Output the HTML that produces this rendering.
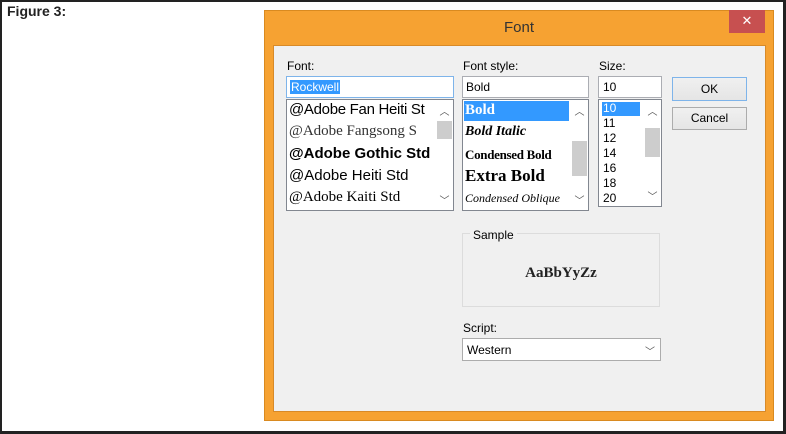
<!DOCTYPE html>
<html><head><style>
*{margin:0;padding:0;box-sizing:border-box}
body{width:786px;height:434px;background:#fff;position:relative;overflow:hidden;font-family:"Liberation Sans",sans-serif;font-size:12px;color:#000}
.frame{position:absolute;left:0;top:0;width:786px;height:434px;border:2px solid #222;border-right-width:3px;border-bottom-width:3px}
.a{position:absolute}
.dlg{left:264px;top:10px;width:510px;height:411px;background:#f6a232;border:1px solid #d98a20}
.client{left:273px;top:45px;width:493px;height:367px;background:#f0f0f0;border:1px solid #d88a28}
.box{background:#fff;border:1px solid #abadb3}
.lst{background:#fff;border:1px solid #828790;overflow:hidden}
.sb{position:absolute;background:#fff;width:17px;top:0;bottom:0;right:0}
.thumb{position:absolute;background:#cdcdcd;left:1px;right:1px}
.ar{position:absolute;left:0;width:17px;text-align:center;font-size:10px;color:#555}
.btn{background:linear-gradient(#f0f0f0,#e5e5e5);border:1px solid #acacac;text-align:center;line-height:21px;font-size:12px}
.it{position:absolute;left:2px;white-space:nowrap}
</style></head><body>
<div class="frame"></div>
<div class="a" style="left:7px;top:3px;font-weight:bold;font-size:14px;color:#222">Figure 3:</div>

<div class="a dlg"></div>
<div class="a" style="left:264px;top:19px;width:510px;text-align:center;font-size:15px;color:#333">Font</div>
<div class="a" style="left:729px;top:10px;width:36px;height:23px;background:#c75050;color:#fff;text-align:center;font-size:13px;line-height:22px">✕</div>
<div class="a client"></div>

<div class="a" style="left:287px;top:59px">Font:</div>
<div class="a box" style="left:286px;top:76px;width:168px;height:22px;border-color:#7eb4ea"><span style="position:absolute;left:3px;top:3px;background:#3399ff;color:#fff;padding:0 1px">Rockwell</span></div>
<div class="a lst" style="left:286px;top:99px;width:168px;height:112px">
 <div class="it" style="top:1px;font-size:15px;letter-spacing:-0.3px">@Adobe Fan Heiti St</div>
 <div class="it" style="top:23px;font-size:15px;font-family:'Liberation Serif',serif;color:#333">@Adobe Fangsong S</div>
 <div class="it" style="top:45px;font-size:15px;font-weight:bold">@Adobe Gothic Std</div>
 <div class="it" style="top:67px;font-size:15px">@Adobe Heiti Std</div>
 <div class="it" style="top:89px;font-size:15px;font-family:'Liberation Serif',serif">@Adobe Kaiti Std</div>
 <div class="sb"><div class="ar" style="top:3px">︿</div><div class="thumb" style="top:21px;height:18px"></div><div class="ar" style="bottom:3px">﹀</div></div>
</div>

<div class="a" style="left:463px;top:59px">Font style:</div>
<div class="a box" style="left:462px;top:76px;width:127px;height:22px"><span style="position:absolute;left:3px;top:3px">Bold</span></div>
<div class="a lst" style="left:462px;top:99px;width:127px;height:112px;font-family:'Liberation Serif',serif">
 <div class="a" style="left:1px;top:1px;width:105px;height:20px;background:#3399ff"></div>
 <div class="it" style="top:2px;font-size:15px;font-weight:bold;color:#fff">Bold</div>
 <div class="it" style="top:24px;font-size:14px;font-weight:bold;font-style:italic">Bold Italic</div>
 <div class="it" style="top:47px;font-size:13px;font-weight:bold;letter-spacing:-0.3px">Condensed Bold</div>
 <div class="it" style="top:66px;font-size:17px;font-weight:bold">Extra Bold</div>
 <div class="it" style="top:91px;font-size:12px;font-style:italic">Condensed Oblique</div>
 <div class="sb"><div class="ar" style="top:3px">︿</div><div class="thumb" style="top:41px;height:35px"></div><div class="ar" style="bottom:3px">﹀</div></div>
</div>

<div class="a" style="left:599px;top:59px">Size:</div>
<div class="a box" style="left:598px;top:76px;width:64px;height:22px"><span style="position:absolute;left:4px;top:3px">10</span></div>
<div class="a lst" style="left:598px;top:99px;width:64px;height:108px">
 <div class="a" style="left:3px;top:2px;width:38px;height:14px;background:#3399ff"></div>
 <div class="it" style="left:4px;top:1px;color:#fff">10</div>
 <div class="it" style="left:4px;top:16px">11</div>
 <div class="it" style="left:4px;top:31px">12</div>
 <div class="it" style="left:4px;top:46px">14</div>
 <div class="it" style="left:4px;top:61px">16</div>
 <div class="it" style="left:4px;top:76px">18</div>
 <div class="it" style="left:4px;top:91px">20</div>
 <div class="sb"><div class="ar" style="top:3px">︿</div><div class="thumb" style="top:28px;height:29px"></div><div class="ar" style="bottom:3px">﹀</div></div>
</div>

<div class="a btn" style="left:672px;top:77px;width:75px;height:24px;border-color:#7eb4ea;line-height:22px">OK</div>
<div class="a btn" style="left:672px;top:107px;width:75px;height:23px">Cancel</div>

<div class="a" style="left:462px;top:233px;width:198px;height:74px;border:1px solid #dcdcdc"></div>
<div class="a" style="left:470px;top:228px;background:#f0f0f0;padding:0 3px">Sample</div>
<div class="a" style="left:462px;top:265px;width:198px;text-align:center;font-family:'Liberation Serif',serif;font-weight:bold;font-size:15px;color:#222">AaBbYyZz</div>

<div class="a" style="left:463px;top:321px">Script:</div>
<div class="a box" style="left:462px;top:338px;width:199px;height:23px;border-color:#acacac"><span style="position:absolute;left:4px;top:4px">Western</span><span style="position:absolute;right:5px;top:4px;font-size:10px;color:#555">﹀</span></div>
</body></html>
